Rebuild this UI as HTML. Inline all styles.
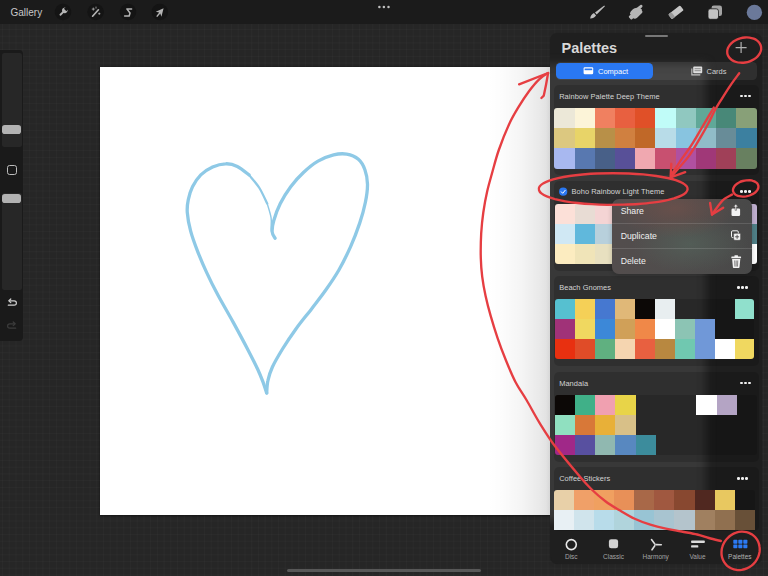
<!DOCTYPE html>
<html><head><meta charset="utf-8"><title>Palettes</title>
<style>
*{margin:0;padding:0;box-sizing:border-box}
html,body{width:768px;height:576px;overflow:hidden;background:#262626;font-family:"Liberation Sans",sans-serif;color:#ddd}
.abs,.sw,.t{position:absolute}
.t{white-space:nowrap;line-height:1}
#bg{left:0;top:0;width:768px;height:576px;background-color:#262626;
 background-image:linear-gradient(rgba(255,255,255,.018) 1px,transparent 1px),linear-gradient(90deg,rgba(255,255,255,.018) 1px,transparent 1px);
 background-size:6.74px 6.74px;background-position:2px 2px}
#topbar{left:0;top:0;width:768px;height:24px;background:#1b1b1b}
#canvas{left:99.7px;top:67.2px;width:500px;height:447.6px;background:#fff;box-shadow:0 0 2px 0.5px rgba(0,0,0,.5)}
#cshadow{left:488px;top:67.2px;width:63px;height:447.6px;background:linear-gradient(90deg,rgba(0,0,0,0) 0%,rgba(0,0,0,.012) 22%,rgba(0,0,0,.04) 52%,rgba(0,0,0,.085) 82%,rgba(0,0,0,.13) 100%)}
#side{left:0;top:49.7px;width:23px;height:291.3px;background:#1a1a1a;border-radius:0 4px 4px 0}
.track{left:2px;width:19.7px;background:#272727;border-radius:2.5px}
.knob{left:2.2px;width:19.3px;height:9.8px;border-radius:2.8px;background:#b2b2b2}
#panel{left:550.3px;top:33px;width:211.7px;height:531px;border-radius:7px;overflow:hidden;
 background:#1f1f1f;box-shadow:0 0 5px rgba(0,0,0,.08)}
#glow{position:absolute;left:-40px;top:31px;width:196px;height:457px;background:#383838;filter:blur(5px)}
.card{left:553.5px;width:205px;height:90px;border-radius:5px;background:rgba(0,0,0,.15)}
.pal{overflow:hidden;background:rgba(0,0,0,.13)}
.title{left:559.2px;font-size:7.45px;color:#d4d4d4;letter-spacing:.05px}
.dots{left:739px;width:14px;height:4px}
.dots i{position:absolute;top:0;width:2.7px;height:2.7px;border-radius:50%;background:#f2f2f2}
#tabbar{left:550.5px;top:530.5px;width:211.5px;height:33.5px;border-radius:0 0 7px 7px;background:#1f1f1f}
.tab{font-size:6.5px;color:#a4a4a4;transform:translateX(-50%)}
#menu{left:612px;top:199px;width:139.5px;height:74.5px;border-radius:7px;overflow:hidden;
 background:
  radial-gradient(ellipse 62px 30px at 45% 12%,rgba(128,82,74,.5),rgba(128,82,74,0) 100%),
  radial-gradient(ellipse 58px 28px at 56% 60%,rgba(88,112,100,.45),rgba(88,112,100,0) 100%),
  linear-gradient(90deg,#534d4d,#4f4d4c 50%,#484848);
 box-shadow:0 1px 5px rgba(0,0,0,.2)}
#menu .sep{position:absolute;left:0;width:100%;height:1px;background:rgba(255,255,255,.13)}
.mi{left:620.7px;font-size:8.7px;color:#f0f0f0}
</style></head><body>
<div id="bg" class="abs"></div>
<div id="canvas" class="abs"></div>
<div id="cshadow" class="abs"></div>
<div id="topbar" class="abs"></div>
<div class="abs" style="left:287.4px;top:568.5px;width:193.2px;height:3.3px;border-radius:1.7px;background:#585858"></div>
<div class="t" style="left:10.5px;top:7.8px;font-size:10px;color:#c8c8c8">Gallery</div>
<div id="side" class="abs"></div>
<div class="abs track" style="top:52.5px;height:94.5px"></div>
<div class="abs track" style="top:192.5px;height:97px"></div>
<div class="abs knob" style="top:124.5px"></div>
<div class="abs knob" style="top:193.6px"></div>
<div class="abs" style="left:6.7px;top:165px;width:10.2px;height:10.2px;border:1.2px solid #bdbdbd;border-radius:2.6px"></div>
<div id="panel" class="abs"><div id="glow"></div></div>
<div class="abs" style="left:644.5px;top:35.3px;width:23px;height:2.2px;border-radius:1.1px;background:#777"></div>
<div class="t" style="left:561.5px;top:40.8px;font-size:14.5px;font-weight:bold;color:#d8d8d8">Palettes</div>
<div class="abs" style="left:555.5px;top:62px;width:201.5px;height:17.8px;border-radius:4.5px;background:rgba(255,255,255,.075)"></div>
<div class="abs" style="left:556px;top:62.5px;width:96.7px;height:16.800px;border-radius:4.5px;background:#2a78f2"></div>
<div class="t" style="left:598px;top:67.5px;font-size:7.5px;color:#fff">Compact</div>
<div class="t" style="left:706.5px;top:67.5px;font-size:7.5px;color:#d0d0d0">Cards</div>

<div class="abs card" style="top:84.6px;height:90px"></div>
<div class="t title" style="left:559.2px;top:92.6px">Rainbow Palette Deep Theme</div>
<div class="abs dots" style="left:739.95px;top:94.69999999999999px"><i style="left:0"></i><i style="left:4.2px"></i><i style="left:8.4px"></i></div>
<div class="abs pal" style="left:554.3px;top:107.89999999999999px;width:202.40px;height:60.900000000000006px;border-radius:3px">
<div class="sw" style="left:0.00px;top:0.00px;width:20.54px;height:20.60px;background:#ece8d8"></div>
<div class="sw" style="left:20.24px;top:0.00px;width:20.54px;height:20.60px;background:#fcf4d8"></div>
<div class="sw" style="left:40.48px;top:0.00px;width:20.54px;height:20.60px;background:#f08060"></div>
<div class="sw" style="left:60.72px;top:0.00px;width:20.54px;height:20.60px;background:#e86040"></div>
<div class="sw" style="left:80.96px;top:0.00px;width:20.54px;height:20.60px;background:#e05028"></div>
<div class="sw" style="left:101.20px;top:0.00px;width:20.54px;height:20.60px;background:#c0fcf8"></div>
<div class="sw" style="left:121.44px;top:0.00px;width:20.54px;height:20.60px;background:#90c8c0"></div>
<div class="sw" style="left:141.68px;top:0.00px;width:20.54px;height:20.60px;background:#60a898"></div>
<div class="sw" style="left:161.92px;top:0.00px;width:20.54px;height:20.60px;background:#488878"></div>
<div class="sw" style="left:182.16px;top:0.00px;width:20.54px;height:20.60px;background:#88a078"></div>
<div class="sw" style="left:0.00px;top:20.30px;width:20.54px;height:20.60px;background:#dcc880"></div>
<div class="sw" style="left:20.24px;top:20.30px;width:20.54px;height:20.60px;background:#e8d468"></div>
<div class="sw" style="left:40.48px;top:20.30px;width:20.54px;height:20.60px;background:#b89048"></div>
<div class="sw" style="left:60.72px;top:20.30px;width:20.54px;height:20.60px;background:#d08040"></div>
<div class="sw" style="left:80.96px;top:20.30px;width:20.54px;height:20.60px;background:#c06828"></div>
<div class="sw" style="left:101.20px;top:20.30px;width:20.54px;height:20.60px;background:#b8dce8"></div>
<div class="sw" style="left:121.44px;top:20.30px;width:20.54px;height:20.60px;background:#88c4e0"></div>
<div class="sw" style="left:141.68px;top:20.30px;width:20.54px;height:20.60px;background:#90bcc8"></div>
<div class="sw" style="left:161.92px;top:20.30px;width:20.54px;height:20.60px;background:#688c98"></div>
<div class="sw" style="left:182.16px;top:20.30px;width:20.54px;height:20.60px;background:#3c80a0"></div>
<div class="sw" style="left:0.00px;top:40.60px;width:20.54px;height:20.60px;background:#a8b8f0"></div>
<div class="sw" style="left:20.24px;top:40.60px;width:20.54px;height:20.60px;background:#5878b0"></div>
<div class="sw" style="left:40.48px;top:40.60px;width:20.54px;height:20.60px;background:#486088"></div>
<div class="sw" style="left:60.72px;top:40.60px;width:20.54px;height:20.60px;background:#585098"></div>
<div class="sw" style="left:80.96px;top:40.60px;width:20.54px;height:20.60px;background:#f0a8b0"></div>
<div class="sw" style="left:101.20px;top:40.60px;width:20.54px;height:20.60px;background:#c85070"></div>
<div class="sw" style="left:121.44px;top:40.60px;width:20.54px;height:20.60px;background:#b050a0"></div>
<div class="sw" style="left:141.68px;top:40.60px;width:20.54px;height:20.60px;background:#a03878"></div>
<div class="sw" style="left:161.92px;top:40.60px;width:20.54px;height:20.60px;background:#a04058"></div>
<div class="sw" style="left:182.16px;top:40.60px;width:20.54px;height:20.60px;background:#688060"></div>
</div>
<div class="abs card" style="top:180.7px;height:90px"></div>
<div class="t title" style="left:571.5px;top:188.0px">Boho Rainbow Light Theme</div>
<div class="abs dots" style="left:739.95px;top:190.1px"><i style="left:0"></i><i style="left:4.2px"></i><i style="left:8.4px"></i></div>
<div class="abs pal" style="left:554.75px;top:204.0px;width:202.30px;height:60.300000000000004px;border-radius:3px">
<div class="sw" style="left:0.00px;top:0.00px;width:20.53px;height:20.40px;background:#fce0d8"></div>
<div class="sw" style="left:20.23px;top:0.00px;width:20.53px;height:20.40px;background:#e8dcd4"></div>
<div class="sw" style="left:40.46px;top:0.00px;width:20.53px;height:20.40px;background:#f4d4d4"></div>
<div class="sw" style="left:60.69px;top:0.00px;width:20.53px;height:20.40px;background:#f0d0d0"></div>
<div class="sw" style="left:80.92px;top:0.00px;width:20.53px;height:20.40px;background:#e8c8c8"></div>
<div class="sw" style="left:101.15px;top:0.00px;width:20.53px;height:20.40px;background:#e0c0c0"></div>
<div class="sw" style="left:121.38px;top:0.00px;width:20.53px;height:20.40px;background:#d8c8d0"></div>
<div class="sw" style="left:141.61px;top:0.00px;width:20.53px;height:20.40px;background:#d0c0d0"></div>
<div class="sw" style="left:161.84px;top:0.00px;width:20.53px;height:20.40px;background:#c8b8d0"></div>
<div class="sw" style="left:182.07px;top:0.00px;width:20.53px;height:20.40px;background:#c0b0d0"></div>
<div class="sw" style="left:0.00px;top:20.10px;width:20.53px;height:20.40px;background:#d0e8f4"></div>
<div class="sw" style="left:20.23px;top:20.10px;width:20.53px;height:20.40px;background:#60b8dc"></div>
<div class="sw" style="left:40.46px;top:20.10px;width:20.53px;height:20.40px;background:#b8d0dc"></div>
<div class="sw" style="left:60.69px;top:20.10px;width:20.53px;height:20.40px;background:#a0c0d0"></div>
<div class="sw" style="left:80.92px;top:20.10px;width:20.53px;height:20.40px;background:#90b0c0"></div>
<div class="sw" style="left:101.15px;top:20.10px;width:20.53px;height:20.40px;background:#80a8b0"></div>
<div class="sw" style="left:121.38px;top:20.10px;width:20.53px;height:20.40px;background:#70a0a8"></div>
<div class="sw" style="left:141.61px;top:20.10px;width:20.53px;height:20.40px;background:#609098"></div>
<div class="sw" style="left:161.84px;top:20.10px;width:20.53px;height:20.40px;background:#588890"></div>
<div class="sw" style="left:182.07px;top:20.10px;width:20.53px;height:20.40px;background:#508088"></div>
<div class="sw" style="left:0.00px;top:40.20px;width:20.53px;height:20.40px;background:#fcecc0"></div>
<div class="sw" style="left:20.23px;top:40.20px;width:20.53px;height:20.40px;background:#f0e4b8"></div>
<div class="sw" style="left:40.46px;top:40.20px;width:20.53px;height:20.40px;background:#e8e0c0"></div>
<div class="sw" style="left:60.69px;top:40.20px;width:20.53px;height:20.40px;background:#e8e0c8"></div>
<div class="sw" style="left:80.92px;top:40.20px;width:20.53px;height:20.40px;background:#f0e8d0"></div>
<div class="sw" style="left:101.15px;top:40.20px;width:20.53px;height:20.40px;background:#f0f0e0"></div>
<div class="sw" style="left:121.38px;top:40.20px;width:20.53px;height:20.40px;background:#f8f8f0"></div>
<div class="sw" style="left:141.61px;top:40.20px;width:20.53px;height:20.40px;background:#ffffff"></div>
<div class="sw" style="left:161.84px;top:40.20px;width:20.53px;height:20.40px;background:#ffffff"></div>
<div class="sw" style="left:182.07px;top:40.20px;width:20.53px;height:20.40px;background:#ffffff"></div>
</div>
<div class="abs card" style="top:275.7px;height:90px"></div>
<div class="t title" style="left:559.2px;top:283.7px">Beach Gnomes</div>
<div class="abs dots" style="left:736.95px;top:286.1px"><i style="left:0"></i><i style="left:4.2px"></i><i style="left:8.4px"></i></div>
<div class="abs pal" style="left:554.6px;top:299.0px;width:199.90px;height:60.300000000000004px;border-radius:3px">
<div class="sw" style="left:0.00px;top:0.00px;width:20.29px;height:20.40px;background:#56c0d0"></div>
<div class="sw" style="left:19.99px;top:0.00px;width:20.29px;height:20.40px;background:#f5d057"></div>
<div class="sw" style="left:39.98px;top:0.00px;width:20.29px;height:20.40px;background:#4678d0"></div>
<div class="sw" style="left:59.97px;top:0.00px;width:20.29px;height:20.40px;background:#e0b878"></div>
<div class="sw" style="left:79.96px;top:0.00px;width:20.29px;height:20.40px;background:#0c0806"></div>
<div class="sw" style="left:99.95px;top:0.00px;width:20.29px;height:20.40px;background:#e8eef0"></div>
<div class="sw" style="left:179.91px;top:0.00px;width:20.29px;height:20.40px;background:#90e0cc"></div>
<div class="sw" style="left:0.00px;top:20.10px;width:20.29px;height:20.40px;background:#a03278"></div>
<div class="sw" style="left:19.99px;top:20.10px;width:20.29px;height:20.40px;background:#f0d860"></div>
<div class="sw" style="left:39.98px;top:20.10px;width:20.29px;height:20.40px;background:#3c88d8"></div>
<div class="sw" style="left:59.97px;top:20.10px;width:20.29px;height:20.40px;background:#d0a058"></div>
<div class="sw" style="left:79.96px;top:20.10px;width:20.29px;height:20.40px;background:#f08848"></div>
<div class="sw" style="left:99.95px;top:20.10px;width:20.29px;height:20.40px;background:#ffffff"></div>
<div class="sw" style="left:119.94px;top:20.10px;width:20.29px;height:20.40px;background:#8cc4b4"></div>
<div class="sw" style="left:139.93px;top:20.10px;width:20.29px;height:20.40px;background:#7098d8"></div>
<div class="sw" style="left:0.00px;top:40.20px;width:20.29px;height:20.40px;background:#e83010"></div>
<div class="sw" style="left:19.99px;top:40.20px;width:20.29px;height:20.40px;background:#e04c28"></div>
<div class="sw" style="left:39.98px;top:40.20px;width:20.29px;height:20.40px;background:#60b080"></div>
<div class="sw" style="left:59.97px;top:40.20px;width:20.29px;height:20.40px;background:#f5d5b0"></div>
<div class="sw" style="left:79.96px;top:40.20px;width:20.29px;height:20.40px;background:#e86040"></div>
<div class="sw" style="left:99.95px;top:40.20px;width:20.29px;height:20.40px;background:#b88840"></div>
<div class="sw" style="left:119.94px;top:40.20px;width:20.29px;height:20.40px;background:#70c8b0"></div>
<div class="sw" style="left:139.93px;top:40.20px;width:20.29px;height:20.40px;background:#7098d8"></div>
<div class="sw" style="left:159.92px;top:40.20px;width:20.29px;height:20.40px;background:#ffffff"></div>
<div class="sw" style="left:179.91px;top:40.20px;width:20.29px;height:20.40px;background:#f0d860"></div>
</div>
<div class="abs card" style="top:371.55px;height:90px"></div>
<div class="t title" style="left:559.2px;top:379.55px">Mandala</div>
<div class="abs dots" style="left:739.95px;top:381.65000000000003px"><i style="left:0"></i><i style="left:4.2px"></i><i style="left:8.4px"></i></div>
<div class="abs pal" style="left:554.6px;top:394.85px;width:202.50px;height:60.21px;border-radius:3px">
<div class="sw" style="left:0.00px;top:0.00px;width:20.55px;height:20.37px;background:#0c0806"></div>
<div class="sw" style="left:20.25px;top:0.00px;width:20.55px;height:20.37px;background:#40b088"></div>
<div class="sw" style="left:40.50px;top:0.00px;width:20.55px;height:20.37px;background:#f0a0b0"></div>
<div class="sw" style="left:60.75px;top:0.00px;width:20.55px;height:20.37px;background:#e8d448"></div>
<div class="sw" style="left:141.75px;top:0.00px;width:20.55px;height:20.37px;background:#ffffff"></div>
<div class="sw" style="left:162.00px;top:0.00px;width:20.55px;height:20.37px;background:#b4a4c4"></div>
<div class="sw" style="left:0.00px;top:20.07px;width:20.55px;height:20.37px;background:#90e0c0"></div>
<div class="sw" style="left:20.25px;top:20.07px;width:20.55px;height:20.37px;background:#d87838"></div>
<div class="sw" style="left:40.50px;top:20.07px;width:20.55px;height:20.37px;background:#e8b038"></div>
<div class="sw" style="left:60.75px;top:20.07px;width:20.55px;height:20.37px;background:#d8c088"></div>
<div class="sw" style="left:0.00px;top:40.14px;width:20.55px;height:20.37px;background:#a02888"></div>
<div class="sw" style="left:20.25px;top:40.14px;width:20.55px;height:20.37px;background:#5850a0"></div>
<div class="sw" style="left:40.50px;top:40.14px;width:20.55px;height:20.37px;background:#90b8b0"></div>
<div class="sw" style="left:60.75px;top:40.14px;width:20.55px;height:20.37px;background:#5888c0"></div>
<div class="sw" style="left:81.00px;top:40.14px;width:20.55px;height:20.37px;background:#3c8c9c"></div>
</div>
<div class="abs card" style="top:466.7px;height:64px"></div>
<div class="t title" style="left:559.2px;top:474.7px">Coffee Stickers</div>
<div class="abs dots" style="left:736.95px;top:477.1px"><i style="left:0"></i><i style="left:4.2px"></i><i style="left:8.4px"></i></div>
<div class="abs pal" style="left:554.3px;top:490.0px;width:200.30px;height:40.3px;border-radius:3px 3px 0 0">
<div class="sw" style="left:0.00px;top:0.00px;width:20.33px;height:20.45px;background:#e8d0a8"></div>
<div class="sw" style="left:20.03px;top:0.00px;width:20.33px;height:20.45px;background:#f0a068"></div>
<div class="sw" style="left:40.06px;top:0.00px;width:20.33px;height:20.45px;background:#f0a060"></div>
<div class="sw" style="left:60.09px;top:0.00px;width:20.33px;height:20.45px;background:#e89058"></div>
<div class="sw" style="left:80.12px;top:0.00px;width:20.33px;height:20.45px;background:#a86848"></div>
<div class="sw" style="left:100.15px;top:0.00px;width:20.33px;height:20.45px;background:#a05840"></div>
<div class="sw" style="left:120.18px;top:0.00px;width:20.33px;height:20.45px;background:#884830"></div>
<div class="sw" style="left:140.21px;top:0.00px;width:20.33px;height:20.45px;background:#502820"></div>
<div class="sw" style="left:160.24px;top:0.00px;width:20.33px;height:20.45px;background:#e8c860"></div>
<div class="sw" style="left:0.00px;top:20.15px;width:20.33px;height:20.45px;background:#e8f0f4"></div>
<div class="sw" style="left:20.03px;top:20.15px;width:20.33px;height:20.45px;background:#d0e4ec"></div>
<div class="sw" style="left:40.06px;top:20.15px;width:20.33px;height:20.45px;background:#b8dcea"></div>
<div class="sw" style="left:60.09px;top:20.15px;width:20.33px;height:20.45px;background:#b0d4dc"></div>
<div class="sw" style="left:80.12px;top:20.15px;width:20.33px;height:20.45px;background:#98c4d4"></div>
<div class="sw" style="left:100.15px;top:20.15px;width:20.33px;height:20.45px;background:#a8c4d0"></div>
<div class="sw" style="left:120.18px;top:20.15px;width:20.33px;height:20.45px;background:#b4c4cc"></div>
<div class="sw" style="left:140.21px;top:20.15px;width:20.33px;height:20.45px;background:#a08060"></div>
<div class="sw" style="left:160.24px;top:20.15px;width:20.33px;height:20.45px;background:#907050"></div>
<div class="sw" style="left:180.27px;top:20.15px;width:20.33px;height:20.45px;background:#685038"></div>
</div>
<div id="tabbar" class="abs"></div>
<div class="t tab" style="left:571.3px;top:554.2px">Disc</div>
<div class="t tab" style="left:613.5px;top:554.2px">Classic</div>
<div class="t tab" style="left:655.7px;top:554.2px">Harmony</div>
<div class="t tab" style="left:697.5px;top:554.2px">Value</div>
<div class="t tab" style="left:739.8px;top:554.2px;color:#b4b4b4">Palettes</div>
<div id="menu" class="abs"><div class="sep" style="top:23.8px"></div><div class="sep" style="top:48.9px"></div></div>
<div class="t mi" style="top:206.8px">Share</div>
<div class="t mi" style="top:231.8px">Duplicate</div>
<div class="t mi" style="top:256.8px">Delete</div>

<svg class="abs" style="left:0;top:0" width="768" height="576" viewBox="0 0 768 576">
<g fill="none" stroke="#8ec9e6" stroke-linecap="round" stroke-linejoin="round"><path d="M275.1 238.2C274.5 237.0 272.0 234.3 271.3 230.9C270.6 227.5 271.8 222.5 271.1 217.9C270.4 213.3 267.9 206.0 267.2 203.6" stroke-width="1.4"/><path d="M267.2 203.6C265.9 201.0 262.4 192.8 259.4 188.0C256.4 183.2 250.7 177.1 249.0 174.9" stroke-width="2.3"/><path d="M249.0 174.9C247.1 173.5 241.2 168.3 237.3 166.4C233.4 164.5 229.7 163.6 225.6 163.8C221.5 163.9 216.7 165.2 212.6 167.1C208.5 169.0 204.2 171.6 200.8 174.9C197.5 178.2 194.6 182.6 192.5 186.7C190.4 190.8 189.2 195.4 188.3 199.7C187.4 204.0 186.9 207.5 187.3 212.7C187.7 217.9 188.8 224.4 190.6 230.9C192.3 237.4 195.1 244.9 197.8 251.8C200.5 258.8 203.3 265.4 206.7 272.6C210.0 279.8 213.5 286.8 217.9 295.0C222.3 303.2 228.1 312.9 233.0 321.9C237.9 330.9 243.4 341.1 247.5 349.0C251.6 356.9 255.1 363.7 257.7 369.3C260.3 374.9 261.8 378.9 263.3 382.8C264.8 386.8 266.1 391.3 266.7 393.0" stroke-width="3.3"/><path d="M266.7 393.0C266.9 390.9 266.9 384.9 267.9 380.6C268.8 376.3 270.0 372.3 272.4 367.0C274.8 361.7 278.6 355.4 282.5 349.0C286.4 342.6 291.2 335.5 296.1 328.7C301.0 321.9 307.0 314.8 311.9 308.4C316.8 302.0 321.1 296.7 325.6 290.3C330.1 283.9 334.7 277.3 338.9 270.0C343.1 262.7 347.1 254.4 350.6 246.6C354.1 238.8 357.2 230.5 359.7 223.1C362.2 215.7 364.1 208.8 365.4 202.3C366.7 195.8 367.6 189.5 367.5 184.1C367.4 178.7 366.4 173.8 364.9 169.7C363.4 165.6 361.4 161.9 358.4 159.3C355.4 156.7 350.8 154.8 346.7 154.1C342.6 153.4 338.4 153.7 333.6 154.9C328.8 156.1 323.0 158.2 318.0 161.1C313.0 164.0 308.2 168.0 303.7 172.3C299.1 176.6 294.6 181.5 290.7 186.7C286.8 191.9 283.1 198.0 280.3 203.6C277.5 209.2 275.1 215.8 273.8 220.5C272.4 225.2 272.0 229.1 272.2 232.0C272.4 234.9 274.6 237.2 275.1 238.2" stroke-width="3.3"/></g>
<circle cx="63" cy="12" r="8.3" fill="#141414"/>
<circle cx="95.6" cy="12" r="8.3" fill="#141414"/>
<circle cx="128" cy="12" r="8.3" fill="#141414"/>
<circle cx="159.8" cy="12" r="8.3" fill="#141414"/>
<g transform="translate(63.6 11.6) rotate(45) scale(.85)"><rect x="-1.1" y="-1.5" width="2.2" height="7.8" rx="1" fill="#b4b4b4"/><path d="M-3.2 -2.8a3.3 3.3 0 1 0 6.4 0l-1.2-2.6v2.8h-4v-2.8z" fill="#b4b4b4"/></g>
<g fill="none" stroke="#b4b4b4" stroke-linecap="round"><path d="M92.6 16.2L98.4 9.8" stroke-width="1.7"/><path d="M93.3 8v2.2M92.2 9.1h2.2M99.3 13v1.4M98.6 13.7h1.4M96 7v1.2" stroke-width=".8"/></g>
<path d="M131.6 8.900H126.8L130 13 129.200 16H124.6" fill="none" stroke="#b4b4b4" stroke-width="1.5" stroke-linejoin="round" stroke-linecap="round"/>
<path d="M163.600 8.200L155.800 11.700 159.200 12.600 156.200 16.200 157.300 17.100 160.300 13.500 161.400 16.700Z" fill="#b4b4b4"/>
<circle cx="379.4" cy="7.1" r="1.25" fill="#c0c0c0"/>
<circle cx="383.9" cy="7.1" r="1.25" fill="#c0c0c0"/>
<circle cx="388.5" cy="7.1" r="1.25" fill="#c0c0c0"/>
<g transform="translate(597.2 12.3) rotate(49)"><path d="M-0.5 -9.800L0.5 -9.800 1.300 1.800 -1.300 1.800Z" fill="#bebebe"/><path d="M-1.600 2.900h3.200c.6 2.400 0 4.800-1.600 6.400-1.600-1.600-2.200-4-1.600-6.400z" fill="#bebebe"/></g>
<g transform="translate(636.4 12.4) rotate(-42)" fill="#b6b6b6"><rect x="-8.800" y="-2.200" width="5" height="4.400" rx="1"/><path d="M-5.500 -3.600C-3 -5.200 1.500 -5 3.500 -3.200L8 -2.800C9.500 -2.600 9.500 -0.400 8 -0.200L5.200 0.200C6.400 0.600 6.400 2.200 5 2.400 5.600 3.400 4.600 4.400 3.400 4.200L-3 4.400C-5 4.400 -6.200 3.400 -6.200 1.500Z"/></g>
<g transform="translate(676 12.3) rotate(-38)"><rect x="-7.500" y="-3.100" width="15" height="6.200" rx="1.200" fill="#c6c6c6"/><rect x="-7.500" y="-3.100" width="4" height="6.200" rx="1.200" fill="#989898"/></g>
<rect x="711.500" y="5.600" width="10.500" height="10.500" rx="2.300" fill="#a4a4a4"/><rect x="708" y="8.800" width="10.500" height="10.500" rx="2.300" fill="#c4c4c4" stroke="#1b1b1b" stroke-width=".8"/>
<circle cx="754.4" cy="12.4" r="7.700" fill="#6b799a"/>
<g fill="none" stroke-linecap="round" stroke-linejoin="round" stroke-width="1.2"><path d="M9.500 300.800H14.200a2.100 2.100 0 0 1 0 4.400H8.300" stroke="#cfcfcf"/><path d="M10.800 299L8.800 300.800 10.800 302.600" stroke="#cfcfcf"/><path d="M14.500 323.800H9.800a2.100 2.100 0 0 0 0 4.400H15.700" stroke="#3c3c3c"/><path d="M13.200 322L15.200 323.800 13.200 325.600" stroke="#3c3c3c"/></g>
<path d="M741.100 42.100v11M735.600 47.600h11" stroke="#b0b0b0" stroke-width="1.200" fill="none"/>
<rect x="583.600" y="67.300" width="9.600" height="7" rx="1.200" fill="#fff"/><rect x="584.600" y="68.500" width="7.600" height="1.700" fill="#2a78f2"/>
<g fill="#dedede"><rect x="693.200" y="66.600" width="9" height="6.600" rx=".9"/><path d="M691.300 68.600v6.800h9v-1.100h-7.900v-5.700z" fill="#c4c4c4"/></g><path d="M694.600 68.700h6.200M694.600 70.700h6.200" stroke="#555" stroke-width=".6"/>
<circle cx="563.2" cy="191.7" r="4.1" fill="#2a78f2"/><path d="M561.300 191.800l1.400 1.500 2.500-3" fill="none" stroke="#fff" stroke-width="1" stroke-linecap="round" stroke-linejoin="round"/>
<g fill="#f2f2f2"><rect x="731.500" y="208.500" width="8.600" height="7.500" rx="1.200"/><path d="M735.800 204.300l2.300 2.500h-1.600v3.500h-1.400v-3.500h-1.600z" stroke="#4a4646" stroke-width=".5"/></g>
<rect x="731.500" y="230.800" width="6.800" height="6.800" rx="1.200" fill="none" stroke="#f2f2f2" stroke-width="1"/><rect x="733.600" y="233.300" width="7" height="7" rx="1.300" fill="#f2f2f2" stroke="#4a4848" stroke-width=".6"/><path d="M737.100 234.800v4M735.100 236.800h4" stroke="#4a4848" stroke-width=".9"/>
<g transform="translate(736.2 261.6) scale(1.28) translate(-735.8 -261.2)"><g fill="#f2f2f2"><rect x="732" y="257.300" width="7.600" height="1.200" rx=".4"/><rect x="734.400" y="256.200" width="2.800" height="1.400" rx=".4"/><path d="M732.600 259.200h6.400l-.6 6.200c0 .5-.4.800-.9.800h-3.400c-.5 0-.9-.3-.9-.8z"/></g><path d="M734.600 260.300l.2 4.800M735.800 260.300v4.800M737 260.300l-.2 4.800" stroke="#4a4848" stroke-width=".5"/></g>
<circle cx="571.300" cy="544.600" r="5" fill="none" stroke="#e8e8e8" stroke-width="1.600"/>
<rect x="608.900" y="539.200" width="9.200" height="9" rx="2.300" fill="#d2d2d2"/>
<path d="M651.500 539.600L654.800 544M656.200 544.600L661.300 544.700M654.800 545.700L652 549.800" fill="none" stroke="#dcdcdc" stroke-width="1.600" stroke-linecap="round"/>
<rect x="691.100" y="540.500" width="13.700" height="2.400" rx=".7" fill="#dcdcdc"/><rect x="691.100" y="545.300" width="7.200" height="2.300" rx=".7" fill="#dcdcdc"/>
<rect x="733.30" y="539.80" width="4.1" height="3.9" rx=".7" fill="#2b7af4"/>
<rect x="738.30" y="539.80" width="4.1" height="3.9" rx=".7" fill="#2b7af4"/>
<rect x="743.30" y="539.80" width="4.1" height="3.9" rx=".7" fill="#2b7af4"/>
<rect x="733.30" y="544.40" width="4.1" height="3.9" rx=".7" fill="#2b7af4"/>
<rect x="738.30" y="544.40" width="4.1" height="3.9" rx=".7" fill="#2b7af4"/>
<rect x="743.30" y="544.40" width="4.1" height="3.9" rx=".7" fill="#2b7af4"/>
<g fill="none" stroke="#e63e42" stroke-width="2.35" stroke-linecap="round" stroke-linejoin="round">
<path d="M720.8 541.0C718.8 540.5 712.8 539.1 708.9 538.0C705.0 536.9 701.8 535.6 697.2 534.5C692.7 533.4 686.8 532.5 681.6 531.5C676.4 530.5 671.1 529.7 665.9 528.6C660.7 527.5 655.5 526.3 650.3 524.7C645.1 523.1 639.9 521.2 634.7 518.8C629.5 516.3 624.0 512.9 619.1 510.0C614.2 507.1 610.0 504.7 605.4 501.2C600.8 497.8 595.9 493.6 591.7 489.5C587.5 485.4 586.0 483.9 580.0 476.8C574.0 469.7 562.3 455.8 555.5 446.8C548.7 437.8 544.2 430.4 539.4 422.6C534.6 414.8 530.5 406.7 526.5 400.0C522.5 393.3 519.1 388.9 515.6 382.2C512.1 375.5 508.8 367.4 505.8 360.0C502.8 352.6 500.0 345.2 497.5 337.8C495.0 330.4 492.6 322.6 490.6 315.6C488.6 308.7 487.0 302.6 485.6 296.1C484.2 289.6 483.0 283.1 482.2 276.7C481.4 270.3 481.0 265.2 480.8 258.0C480.6 250.8 480.8 240.9 481.2 233.3C481.7 225.7 482.3 219.4 483.3 212.5C484.3 205.6 485.5 198.6 487.1 191.7C488.7 184.8 490.8 177.8 492.7 170.8C494.6 163.9 496.1 157.8 498.8 150.0C501.5 142.2 505.8 131.4 509.1 124.2C512.4 117.0 515.3 112.4 518.6 106.9C521.9 101.4 525.5 95.9 529.0 91.2C532.5 86.6 536.2 82.1 539.4 79.1C542.6 76.1 546.6 74.0 548.1 73.0"/>
<path d="M519.1 84.3Q534 78.5 548.1 73Q546 86 543.8 95.6L541.4 98"/>
<path d="M732.1 42.5C732.8 42.1 734.5 40.7 735.9 40.0C737.2 39.3 738.7 38.7 740.2 38.3C741.7 37.9 743.3 37.6 744.9 37.5C746.4 37.4 748.0 37.4 749.5 37.6C751.0 37.8 752.4 38.2 753.7 38.7C755.0 39.2 756.2 39.9 757.2 40.6C758.2 41.4 759.1 42.3 759.7 43.3C760.3 44.3 760.8 45.4 761.0 46.5C761.2 47.6 761.3 48.8 761.1 49.9C760.9 51.1 760.4 52.3 759.8 53.4C759.2 54.5 758.4 55.6 757.4 56.6C756.4 57.6 755.3 58.5 754.0 59.3C752.7 60.1 751.3 60.8 749.8 61.3C748.4 61.9 746.8 62.3 745.2 62.5C743.7 62.7 742.1 62.8 740.6 62.7C739.1 62.6 737.5 62.4 736.2 62.0C734.8 61.6 733.5 61.0 732.4 60.4C731.3 59.7 730.3 58.8 729.5 57.9C728.7 57.0 728.1 56.0 727.7 54.9C727.3 53.9 727.2 52.7 727.2 51.6C727.2 50.4 727.5 49.2 728.0 48.1C728.4 46.9 729.1 45.8 730.0 44.7C730.8 43.7 731.9 42.7 733.0 41.8C734.2 40.9 736.3 39.9 737.0 39.5"/>
<path d="M739.2 73.3C737.8 75.2 733.8 80.4 730.8 84.8C727.8 89.1 724.1 95.1 721.5 99.3C718.9 103.5 717.5 105.6 715.2 109.8C712.9 113.9 710.5 119.4 707.9 124.3C705.3 129.2 702.7 133.7 699.6 138.9C696.5 144.1 692.7 150.7 689.2 155.6C685.7 160.5 681.7 164.6 678.8 168.1C675.8 171.6 672.5 175.4 671.3 176.8"/>
<path d="M713.8 107.5C711.7 111.0 705.2 122.0 701.4 128.5C697.6 134.9 694.3 140.8 690.8 146.2C687.3 151.6 683.5 156.2 680.4 160.8C677.3 165.4 673.6 171.4 672.2 173.5"/>
<path d="M671.3 163.800L670.600 177.300 685.200 172.200"/>
<path d="M675.0 179.9C676.1 180.4 680.1 181.7 682.0 182.7C683.9 183.7 685.3 184.8 686.3 185.8C687.2 186.9 687.7 188.1 687.6 189.2C687.5 190.3 687.0 191.5 685.9 192.6C684.9 193.6 683.3 194.7 681.3 195.6C679.3 196.6 676.8 197.5 673.9 198.4C671.0 199.2 667.7 200.1 664.1 200.8C660.4 201.5 656.3 202.1 652.1 202.6C647.8 203.2 643.2 203.6 638.4 204.0C633.6 204.3 628.6 204.5 623.4 204.7C618.2 204.8 612.4 204.8 607.2 204.8C601.9 204.7 596.8 204.5 591.9 204.2C587.0 203.9 582.2 203.5 577.8 203.0C573.4 202.6 569.2 202.0 565.3 201.3C561.5 200.6 558.0 199.9 554.9 199.1C551.8 198.2 549.0 197.3 546.8 196.4C544.6 195.5 542.7 194.4 541.4 193.4C540.1 192.4 539.3 191.3 539.0 190.1C538.6 189.0 538.8 187.8 539.5 186.7C540.2 185.6 541.3 184.5 543.0 183.5C544.6 182.5 546.8 181.5 549.3 180.6C551.9 179.7 554.9 178.9 558.2 178.1C561.6 177.3 565.4 176.6 569.5 176.0C573.5 175.4 577.9 174.9 582.5 174.5C587.1 174.1 592.0 173.7 597.1 173.5C602.1 173.3 607.6 173.2 612.8 173.2C618.1 173.2 623.6 173.3 628.7 173.5C633.8 173.7 638.7 174.0 643.3 174.4C647.9 174.8 652.4 175.4 656.4 176.0C660.5 176.6 664.3 177.3 667.7 178.0C671.1 178.8 674.2 179.6 676.8 180.5C679.4 181.4 682.1 182.9 683.2 183.4"/>
<path d="M734.6 186.0C734.9 185.7 735.9 184.6 736.7 184.0C737.5 183.3 738.5 182.7 739.5 182.2C740.5 181.7 741.7 181.3 742.8 181.0C743.9 180.7 745.2 180.4 746.3 180.3C747.5 180.2 748.7 180.2 749.8 180.2C750.9 180.3 752.0 180.5 752.9 180.8C753.9 181.1 754.8 181.5 755.5 182.0C756.3 182.4 756.9 183.0 757.4 183.6C757.8 184.2 758.1 184.9 758.3 185.6C758.5 186.3 758.4 187.1 758.3 187.9C758.1 188.6 757.7 189.4 757.3 190.1C756.8 190.9 756.1 191.6 755.4 192.3C754.6 192.9 753.7 193.6 752.7 194.1C751.8 194.7 750.7 195.1 749.6 195.5C748.4 195.9 747.2 196.2 746.1 196.4C744.9 196.5 743.7 196.6 742.6 196.6C741.4 196.6 740.3 196.4 739.3 196.2C738.3 196.0 737.3 195.6 736.5 195.2C735.7 194.8 735.0 194.3 734.5 193.7C733.9 193.1 733.5 192.5 733.3 191.8C733.0 191.1 732.9 190.3 733.0 189.6C733.1 188.8 733.4 188.0 733.8 187.3C734.2 186.6 734.7 185.8 735.4 185.1C736.1 184.4 737.4 183.5 737.9 183.2"/>
<path d="M732.1 194.5C730.8 195.3 726.5 197.2 724.1 199.2C721.7 201.2 719.6 204.1 717.6 206.7C715.6 209.2 712.9 213.2 712.0 214.5"/>
<path d="M710.1 203L712 214.600 723.200 207.700"/>
<path d="M727.1 538.6C727.8 538.0 729.8 536.0 731.3 535.0C732.8 534.0 734.5 533.2 736.2 532.7C737.9 532.1 739.7 531.8 741.4 531.7C743.2 531.6 745.0 531.8 746.6 532.2C748.3 532.6 749.9 533.3 751.4 534.1C752.8 535.0 754.2 536.1 755.3 537.3C756.4 538.6 757.4 540.0 758.1 541.5C758.8 543.1 759.3 544.8 759.5 546.5C759.8 548.2 759.8 550.0 759.6 551.7C759.3 553.5 758.9 555.3 758.2 556.9C757.5 558.6 756.5 560.2 755.4 561.7C754.3 563.1 753.0 564.5 751.6 565.6C750.1 566.7 748.5 567.7 746.9 568.4C745.2 569.1 743.4 569.6 741.7 569.9C740.0 570.1 738.1 570.2 736.4 569.9C734.7 569.7 733.0 569.2 731.5 568.5C730.0 567.8 728.5 566.9 727.2 565.8C726.0 564.7 724.9 563.3 724.0 561.9C723.1 560.5 722.5 558.9 722.0 557.2C721.6 555.6 721.4 553.8 721.5 552.0C721.5 550.3 721.8 548.5 722.4 546.7C722.9 545.0 723.7 543.3 724.6 541.8C725.6 540.3 726.8 538.8 728.1 537.5C729.4 536.3 731.8 534.8 732.5 534.3"/>
</g>
</svg>
</body></html>
